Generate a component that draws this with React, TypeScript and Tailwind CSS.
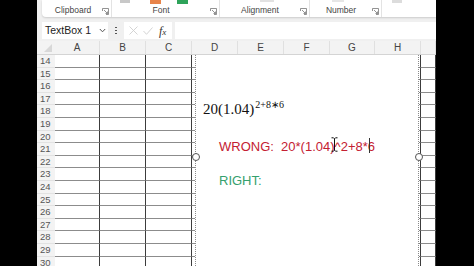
import React from "react"

const cols = [
  { label: "A", w: 45 },
  { label: "B", w: 46 },
  { label: "C", w: 46 },
  { label: "D", w: 46 },
  { label: "E", w: 46 },
  { label: "F", w: 46 },
  { label: "G", w: 45 },
  { label: "H", w: 46 },
  { label: "", w: 15 },
]

const rows = Array.from({ length: 17 }, (_, i) => 14 + i)

const Launcher: React.FC = () => (
  <svg width="7" height="7" viewBox="0 0 7 7" className="text-[#777]">
    <path d="M0.5 3V0.5H6.5V6.5H4" fill="none" stroke="currentColor" strokeWidth="0.8" />
    <path d="M2 2L5.5 5.5M5.5 3.5V5.5H3.5" fill="none" stroke="currentColor" strokeWidth="0.8" />
  </svg>
)

// label sits at a given center offset, launcher at the right edge
const RibbonGroup: React.FC<{ label: string; w: number; center: number; children?: React.ReactNode }> = ({
  label,
  w,
  center,
  children,
}) => (
  <div className="relative h-full shrink-0 border-r border-[#e3e3e3]" style={{ width: w }}>
    {children}
    <span
      className="absolute bottom-[3px] -translate-x-1/2 whitespace-nowrap text-[8.5px] leading-none text-[#444]"
      style={{ left: center }}
    >
      {label}
    </span>
    <span className="absolute bottom-[2px] right-[2px]">
      <Launcher />
    </span>
  </div>
)

const App: React.FC = () => {
  return (
    <div className="flex h-[266px] w-[474px] overflow-hidden bg-black font-['Liberation_Sans',sans-serif]">
      <div className="w-[37px] shrink-0" />
      <div className="flex w-[399px] shrink-0 flex-col bg-[#f0f0f0]">
        {/* ribbon */}
        <div className="ml-[5px] flex h-[17px] rounded-bl-[4px] bg-white shadow-[0_1px_2px_rgba(0,0,0,0.15)]">
          <RibbonGroup label="Clipboard" w={70} center={31} />
          <RibbonGroup label="Font" w={108} center={49}>
            <div className="absolute left-[8px] top-0 h-[3px] w-[10px] bg-[#c8c8c8]" />
            <div className="absolute left-[38px] top-0 h-[4px] w-[11px] bg-[#e8844a]" />
            <div className="absolute left-[65px] top-0 h-[4px] w-[11px] bg-[#2ea35a]" />
          </RibbonGroup>
          <RibbonGroup label="Alignment" w={90} center={40}>
            <div className="absolute left-[40px] top-0 h-[2px] w-[14px] bg-[#e2e2e2]" />
          </RibbonGroup>
          <RibbonGroup label="Number" w={72} center={31}>
            <div className="absolute left-[22px] top-0 h-[2px] w-[12px] bg-[#e6e6e6]" />
          </RibbonGroup>
          <div className="relative flex-1">
            <div className="absolute left-[10px] top-0 h-[3px] w-[10px] bg-[#dcdcdc]" />
          </div>
        </div>

        {/* formula bar */}
        <div className="mt-[5px] flex h-[17px] items-stretch">
          <div className="ml-[5px] flex w-[66px] items-center justify-between bg-white pl-[3px] pr-[2px]">
            <span className="text-[10.5px] leading-none text-[#222]">TextBox 1</span>
            <svg width="7" height="5" viewBox="0 0 7 5">
              <path d="M0.8 1L3.5 3.8L6.2 1" fill="none" stroke="#555" strokeWidth="1" />
            </svg>
          </div>
          <div className="flex w-[16px] flex-col items-center justify-center gap-[1.5px]">
            <span className="h-[1.5px] w-[1.5px] bg-[#555]" />
            <span className="h-[1.5px] w-[1.5px] bg-[#555]" />
            <span className="h-[1.5px] w-[1.5px] bg-[#555]" />
          </div>
          <div className="flex w-[48px] items-center gap-[5px] bg-white pl-[5px]">
            <svg width="9" height="9" viewBox="0 0 9 9">
              <path d="M0.5 0.5L8.5 8.5M8.5 0.5L0.5 8.5" stroke="#cfcfcf" strokeWidth="0.9" />
            </svg>
            <svg width="10" height="8" viewBox="0 0 10 8">
              <path d="M0.5 4L3.5 7.3L9.5 0.5" fill="none" stroke="#cfcfcf" strokeWidth="0.9" />
            </svg>
            <span className="ml-[1px] font-['Liberation_Serif',serif] text-[12px] italic leading-none text-[#333]">
              f<span className="text-[9px]">x</span>
            </span>
          </div>
          <div className="ml-[3px] flex-1 bg-white" />
        </div>

        {/* sheet */}
        <div className="relative mt-[2px] flex-1 overflow-hidden">
          {/* column header */}
          <div className="flex h-[14px] border-b border-[#d4d4d4] bg-[#f3f3f3]">
            <div className="relative w-[18px] shrink-0">
              <svg width="8" height="8" viewBox="0 0 8 8" className="absolute bottom-[2px] right-[3px]">
                <path d="M8 0V8H0Z" fill="#d8d8d8" />
              </svg>
            </div>
            {cols.map((c, i) => (
              <div
                key={i}
                className="flex shrink-0 items-center justify-center border-r border-[#e0e0e0] text-[10px] leading-none text-[#444]"
                style={{ width: c.w }}
              >
                {c.label}
              </div>
            ))}
          </div>

          {/* rows */}
          {rows.map((r) => (
            <div key={r} className="flex h-[12.6px]">
              <div className="flex w-[18px] shrink-0 items-center border-b border-[#e2e2e2] bg-[#f3f3f3] pl-[3px] text-[9.5px] leading-none text-[#555]">
                {r}
              </div>
              {cols.map((c, i) => (
                <div
                  key={i}
                  className="shrink-0 border-b border-r border-b-[#8c8c8c] border-r-[#3c3c3c] bg-white"
                  style={{ width: c.w }}
                />
              ))}
            </div>
          ))}

          {/* text box */}
          <div className="absolute bottom-0 left-[158px] top-[14px] w-[224px] border-x border-dotted border-x-[#8a8a8a] bg-white">
            <div className="pl-[7px] pt-[47px] font-['Liberation_Serif',serif] text-[15px] leading-none text-[#111]">
              20(1.04)
              <span className="relative top-[-6px] ml-[1px] text-[10px]">2+8∗6</span>
            </div>
            <div className="relative mt-[23px] pl-[23px] text-[13px] leading-none text-[#c42032]">
              WRONG:&nbsp;&nbsp;20*(1.04)^2+8*6
              <span className="absolute left-[173px] top-[-2px] h-[15px] w-px bg-[#333]" />
              <svg width="7" height="15" viewBox="0 0 7 15" className="absolute left-[135px] top-[-3px]">
                <path d="M0.5 0.8H2.5L3.5 1.8L4.5 0.8H6.5M3.5 1.8V13.2M0.5 14.2H2.5L3.5 13.2L4.5 14.2H6.5" fill="none" stroke="#111" strokeWidth="1" />
              </svg>
            </div>
            <div className="mt-[21px] pl-[23px] text-[13px] leading-none text-[#35a06e]">RIGHT:</div>

            {/* handles */}
            <span className="absolute left-[-4.5px] top-[98px] h-[8px] w-[8px] rounded-full border border-[#555] bg-white" />
            <span className="absolute right-[-4.5px] top-[98px] h-[8px] w-[8px] rounded-full border border-[#555] bg-white" />
          </div>
        </div>
      </div>
      <div className="flex-1" />
    </div>
  )
}

export default App
